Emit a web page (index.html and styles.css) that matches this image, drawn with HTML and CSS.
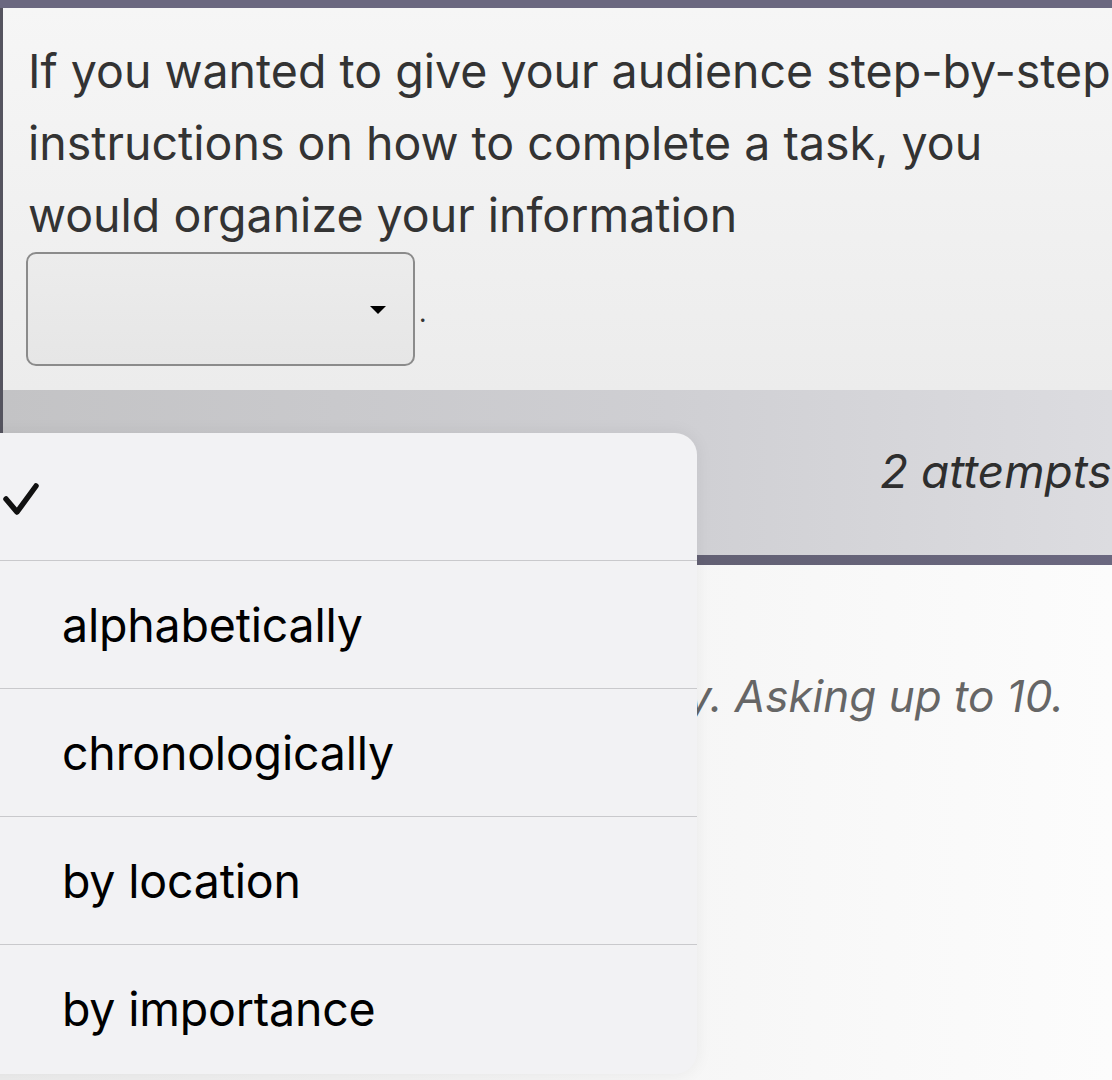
FILE: index.html
```html
<!DOCTYPE html>
<html lang="en">
<head>
  <meta charset="UTF-8">
  <title>Question</title>
  <link rel="stylesheet" href="styles.css">
</head>
<body>

  <div class="topbar"></div>

  <div class="question">
    <div class="prompt">
      <p>If you wanted to give your audience step-by-step<br>instructions on how to complete a task, you<br>would organize your information</p>
      <div class="answer-row">
        <div class="select"><span class="caret"></span></div>
        <span class="dot">.</span>
      </div>
    </div>
    <div class="attempts">2 attempts</div>
  </div>
  <div class="darkbar"></div>

  <div class="feedback">Drawn randomly. Asking up to 10.</div>

  <div class="menu">
    <div class="option selected">
      <svg class="check" width="40" height="40" viewBox="0 0 40 40"><path d="M6 20 L17 33 L36 7" fill="none" stroke="#111" stroke-width="5.5" stroke-linecap="round" stroke-linejoin="round"/></svg>
    </div>
    <div class="option">alphabetically</div>
    <div class="option">chronologically</div>
    <div class="option">by location</div>
    <div class="option">by importance</div>
  </div>

</body>
</html>
```

FILE: styles.css
```css
body {
  margin: 0;
  font-family: Inter, "Noto Sans", sans-serif;
  background: linear-gradient(90deg, #ececec 0%, #f6f6f6 60%, #fcfcfc 100%);
  height: 1080px;
  overflow: hidden;
  position: relative;
}

.topbar {
  height: 8px;
  background: #6b6880;
}

.question {
  border-left: 3px solid #55545f;
}

.prompt {
  background: linear-gradient(180deg, #f6f6f6 0%, #ececec 100%);
  padding: 27px 0 24px 25px;
  height: 331px;
}

.prompt p {
  margin: 0;
  font-size: 46.5px;
  line-height: 72px;
  color: #333;
  white-space: nowrap;
}

.answer-row {
  display: flex;
  align-items: flex-end;
  margin-top: 1px;
}

.select {
  width: 385px;
  height: 110px;
  border: 2px solid #8b8b8b;
  border-radius: 10px;
  background: linear-gradient(180deg, #ececec 0%, #e6e6e6 100%);
  margin-left: -2px;
  position: relative;
}

.caret {
  position: absolute;
  left: 342px;
  top: 52px;
  width: 0;
  height: 0;
  border-left: 8px solid transparent;
  border-right: 8px solid transparent;
  border-top: 8px solid #000;
}

.dot {
  font-size: 26px;
  color: #333;
  margin: 0 0 38px 4px;
}

.attempts {
  height: 165px;
  background: linear-gradient(90deg, #c3c3c5 0%, #cfcfd3 60%, #dcdce0 100%);
  font-size: 46px;
  font-style: italic;
  color: #2e2e2e;
  padding-left: 877px;
  line-height: 162px;
  white-space: nowrap;
  box-sizing: border-box;
}

.darkbar {
  height: 10px;
  background: linear-gradient(90deg, #55545f 0%, #6b6880 100%);
}

.feedback {
  font-size: 44px;
  font-style: italic;
  color: #666;
  white-space: nowrap;
  text-align: right;
  padding: 104px 48px 0 0;
}

.menu {
  position: absolute;
  left: -40px;
  top: 433px;
  width: 737px;
  height: 641px;
  background: #f2f2f4;
  border-radius: 22px;
  box-shadow: 0 0 18px rgba(0, 0, 0, 0.06);
  overflow: hidden;
}

.option {
  height: 128px;
  border-top: 1px solid #c9c9cc;
  box-sizing: border-box;
  padding-left: 102px;
  font-size: 46.5px;
  line-height: 128px;
  color: #000;
  letter-spacing: -0.2px;
}

.option.selected {
  border-top: none;
  height: 127px;
  padding: 46px 0 0 40px;
  display: flex;
  align-items: flex-start;
}
```
